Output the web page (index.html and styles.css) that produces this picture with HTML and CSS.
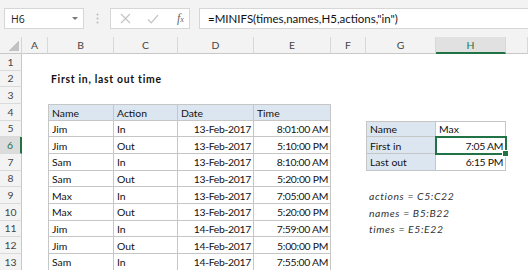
FILE: index.html
```html
<!DOCTYPE html>
<html lang="en">
<head>
    <meta charset="UTF-8">
    <title>MINIFS - first in, last out</title>
    <link rel="stylesheet" href="styles.css">
</head>
<body>
    <div class="toolbar">
        <div class="namebox"><span>H6</span><span class="caret"></span></div>
        <div class="grip">
            <svg width="3" height="11" viewBox="0 0 3 11"><circle cx="1.5" cy="1.5" r="1" fill="#b8b8b8"/><circle cx="1.5" cy="5.5" r="1" fill="#b8b8b8"/><circle cx="1.5" cy="9.5" r="1" fill="#b8b8b8"/></svg>
        </div>
        <div class="fxbtns">
            <span class="btn">
                <svg width="11" height="11" viewBox="0 0 11 11"><path d="M1 1 L10 10 M10 1 L1 10" stroke="#c4c4c4" stroke-width="1.2" fill="none"/></svg>
            </span>
            <span class="btn">
                <svg width="12" height="10" viewBox="0 0 12 10"><path d="M1 5.5 L4.2 8.8 L11 1" stroke="#c4c4c4" stroke-width="1.2" fill="none"/></svg>
            </span>
            <span class="fx"><i>f</i><small>x</small></span>
        </div>
        <div class="formula">=MINIFS(times,names,H5,actions,"in")</div>
    </div>

    <div class="sheet">
        <!-- column headers -->
        <div class="corner"><span></span></div>
        <div class="hd">A</div>
        <div class="hd">B</div>
        <div class="hd">C</div>
        <div class="hd">D</div>
        <div class="hd">E</div>
        <div class="hd">F</div>
        <div class="hd">G</div>
        <div class="hd sel">H</div>
        <div class="hd"></div>

        <div class="rh">1</div>

        <div class="rh">2</div>
        <div class="cell col-b title">First in, last out time</div>

        <div class="rh">3</div>

        <div class="rh">4</div>
        <div class="cell col-b tb first thd">Name</div>
        <div class="cell col-c tb thd">Action</div>
        <div class="cell col-d tb thd">Date</div>
        <div class="cell col-e tb thd">Time</div>

        <div class="rh">5</div>
        <div class="cell col-b tb first">Jim</div>
        <div class="cell col-c tb">In</div>
        <div class="cell col-d tb num">13-Feb-2017</div>
        <div class="cell col-e tb num">8:01:00 AM</div>
        <div class="cell col-g tb first ntop named">Name</div>
        <div class="cell col-h tb ntop">Max</div>

        <div class="rh sel">6</div>
        <div class="cell col-b tb first">Jim</div>
        <div class="cell col-c tb">Out</div>
        <div class="cell col-d tb num">13-Feb-2017</div>
        <div class="cell col-e tb num">5:10:00 PM</div>
        <div class="cell col-g tb first named">First in</div>
        <div class="cell col-h tb num active">7:05 AM</div>

        <div class="rh">7</div>
        <div class="cell col-b tb first">Sam</div>
        <div class="cell col-c tb">In</div>
        <div class="cell col-d tb num">13-Feb-2017</div>
        <div class="cell col-e tb num">8:10:00 AM</div>
        <div class="cell col-g tb first named">Last out</div>
        <div class="cell col-h tb num">6:15 PM</div>

        <div class="rh">8</div>
        <div class="cell col-b tb first">Sam</div>
        <div class="cell col-c tb">Out</div>
        <div class="cell col-d tb num">13-Feb-2017</div>
        <div class="cell col-e tb num">5:20:00 PM</div>

        <div class="rh">9</div>
        <div class="cell col-b tb first">Max</div>
        <div class="cell col-c tb">In</div>
        <div class="cell col-d tb num">13-Feb-2017</div>
        <div class="cell col-e tb num">7:05:00 AM</div>
        <div class="cell col-g note">actions = C5:C22</div>

        <div class="rh">10</div>
        <div class="cell col-b tb first">Max</div>
        <div class="cell col-c tb">Out</div>
        <div class="cell col-d tb num">13-Feb-2017</div>
        <div class="cell col-e tb num">5:20:00 PM</div>
        <div class="cell col-g note">names = B5:B22</div>

        <div class="rh">11</div>
        <div class="cell col-b tb first">Jim</div>
        <div class="cell col-c tb">In</div>
        <div class="cell col-d tb num">14-Feb-2017</div>
        <div class="cell col-e tb num">7:59:00 AM</div>
        <div class="cell col-g note">times = E5:E22</div>

        <div class="rh">12</div>
        <div class="cell col-b tb first">Jim</div>
        <div class="cell col-c tb">Out</div>
        <div class="cell col-d tb num">14-Feb-2017</div>
        <div class="cell col-e tb num">5:00:00 PM</div>

        <div class="rh">13</div>
        <div class="cell col-b tb first">Sam</div>
        <div class="cell col-c tb">In</div>
        <div class="cell col-d tb num">14-Feb-2017</div>
        <div class="cell col-e tb num">7:55:00 AM</div>
    </div>
</body>
</html>
```

FILE: styles.css
```css
body {
    margin: 0;
    width: 528px;
    height: 270px;
    overflow: hidden;
    background-color: #fff;
    font-family: Lato, "Liberation Sans", sans-serif;
    color: #111;
}

/* Formula bar */
.toolbar {
    height: 37px;
    background-color: #f3f3f3;
    display: flex;
    align-items: center;
    padding-left: 4px;
    box-sizing: border-box;
}

.namebox {
    width: 80px;
    height: 21px;
    box-sizing: border-box;
    background-color: #fff;
    border: 1px solid #d6d6d6;
    display: flex;
    align-items: center;
    justify-content: space-between;
    padding: 0 5px 0 6px;
    font-family: "Open Sans", sans-serif;
    font-size: 10.5px;
    color: #222;
}

.caret {
    width: 0;
    height: 0;
    border-left: 3px solid transparent;
    border-right: 3px solid transparent;
    border-top: 3px solid #777;
}

.grip {
    width: 26px;
    display: flex;
    justify-content: center;
}

.fxbtns {
    width: 80px;
    height: 21px;
    box-sizing: border-box;
    background-color: #fff;
    border: 1px solid #d6d6d6;
    display: flex;
    align-items: center;
}

.btn {
    width: 28px;
    display: flex;
    justify-content: center;
}

.fx {
    margin-left: 10px;
    font-family: "Liberation Serif", serif;
    font-size: 12px;
    color: #666;
}

.fx small {
    font-size: 8px;
    font-style: italic;
}

.formula {
    flex: 1;
    height: 21px;
    margin-left: 9px;
    box-sizing: border-box;
    background-color: #fff;
    border: 1px solid #d6d6d6;
    border-right: none;
    display: flex;
    align-items: center;
    padding-left: 8px;
    font-size: 11.5px;
    color: #111;
    white-space: nowrap;
}

/* Worksheet */
.sheet {
    display: grid;
    grid-template-columns: 22px 26px 66px 64px 76px 77px 35px 70px 70px 1fr;
    grid-template-rows: 17px;
    grid-auto-rows: 16.67px;
}

.corner {
    background-color: #f3f3f3;
    border-right: 1px solid #d5d5d5;
    border-bottom: 1px solid #c8c8c8;
    display: flex;
    align-items: flex-end;
    justify-content: flex-end;
    box-sizing: border-box;
}

.corner span {
    width: 10px;
    height: 10px;
    margin: 0 2px 2px 0;
    background: linear-gradient(to bottom right, transparent 50%, #c2c2c2 50%);
}

.hd {
    background-color: #f3f3f3;
    border-right: 1px solid #d8d8d8;
    border-bottom: 1px solid #c8c8c8;
    box-sizing: border-box;
    display: flex;
    align-items: center;
    justify-content: center;
    font-size: 10.4px;
    color: #444;
}

.hd.sel {
    background-color: #e1e1e1;
    border-bottom: 2px solid #217346;
    color: #217346;
}

.rh {
    grid-column: 1;
    background-color: #f3f3f3;
    border-right: 1px solid #c8c8c8;
    border-bottom: 1px solid #dadada;
    box-sizing: border-box;
    display: flex;
    align-items: center;
    justify-content: center;
    font-size: 10.4px;
    color: #444;
}

.rh.sel {
    background-color: #dcdcdc;
    border-right: 2px solid #217346;
    color: #217346;
}

.cell {
    display: flex;
    align-items: center;
    padding: 1px 2px 0 3px;
    box-sizing: border-box;
    white-space: nowrap;
    font-size: 10.4px;
    min-width: 0;
}

.col-b { grid-column: 3; }
.col-c { grid-column: 4; }
.col-d { grid-column: 5; }
.col-e { grid-column: 6; }
.col-g { grid-column: 8; }
.col-h { grid-column: 9; }

.tb {
    border-right: 1px solid #c6c6c6;
    border-bottom: 1px solid #c6c6c6;
}

.tb.first {
    border-left: 1px solid #c6c6c6;
}

.thd {
    background-color: #dce6f1;
    border-top: 1px solid #c6c6c6;
}

.ntop {
    border-top: 1px solid #c6c6c6;
}

.named {
    background-color: #dce6f1;
}

.num {
    justify-content: flex-end;
    letter-spacing: -0.3px;
}

.title {
    font-weight: bold;
    letter-spacing: 0.7px;
}

.note {
    font-style: italic;
    color: #333;
    letter-spacing: 0.6px;
}

/* active cell */
.active {
    position: relative;
    z-index: 1;
    outline: 2px solid #217346;
    outline-offset: -1px;
}

.active::after {
    content: "";
    position: absolute;
    right: -4px;
    bottom: -4px;
    width: 5px;
    height: 5px;
    background-color: #217346;
    border: 1px solid #fff;
}
```
